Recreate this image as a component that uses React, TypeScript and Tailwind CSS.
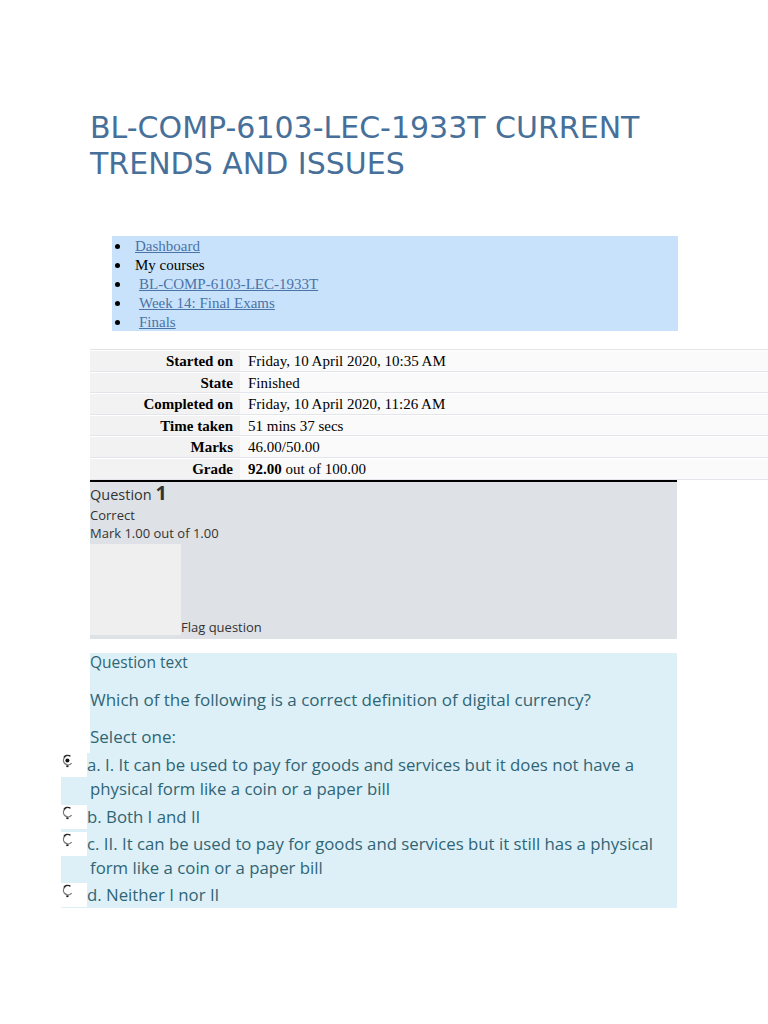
import React from "react";

const Radio = ({ checked }: { checked?: boolean }) => (
  <svg width="12" height="14" viewBox="0 0 12 14" className="block">
    <path d="M8.6 2.4 A4.6 4.6 0 1 0 9.6 9.2" fill="none" stroke="#777" strokeWidth="1.3" />
    <path d="M1.9 3.4 A4.6 4.6 0 0 1 8.1 2" fill="none" stroke="#222" strokeWidth="1.4" />
    {checked ? <circle cx="5.4" cy="6.4" r="2" fill="#111" /> : null}
    <rect x="4.3" y="11.4" width="2.2" height="1.7" fill="#222" />
  </svg>
);

const rows: [string, React.ReactNode][] = [
  ["Started on", "Friday, 10 April 2020, 10:35 AM"],
  ["State", "Finished"],
  ["Completed on", "Friday, 10 April 2020, 11:26 AM"],
  ["Time taken", "51 mins 37 secs"],
  ["Marks", "46.00/50.00"],
  [
    "Grade",
    <>
      <b>92.00</b> out of 100.00
    </>,
  ],
];

const crumbs: { t: string; link: boolean; pad: string }[] = [
  { t: "Dashboard", link: true, pad: "pl-[23px]" },
  { t: "My courses", link: false, pad: "pl-[23px]" },
  { t: "BL-COMP-6103-LEC-1933T", link: true, pad: "pl-[27px]" },
  { t: "Week 14: Final Exams", link: true, pad: "pl-[27px]" },
  { t: "Finals", link: true, pad: "pl-[27px]" },
];

const options: { lines: string[]; checked?: boolean }[] = [
  {
    lines: [
      "a. I. It can be used to pay for goods and services but it does not have a",
      "physical form like a coin or a paper bill",
    ],
    checked: true,
  },
  { lines: ["b. Both I and II"] },
  {
    lines: [
      "c. II. It can be used to pay for goods and services but it still has a physical",
      "form like a coin or a paper bill",
    ],
  },
  { lines: ["d. Neither I nor II"] },
];

export default function App() {
  const sans = { fontFamily: '"Open Sans", "Noto Sans", sans-serif' };
  const dejavu = { fontFamily: '"DejaVu Sans", Verdana, sans-serif' };
  const serif = { fontFamily: '"Liberation Serif", "Times New Roman", serif' };
  return (
    <div className="w-[768px] h-[1024px] bg-white overflow-hidden relative">
      <div className="pt-[110px] pl-[90px]">
        <h1 className="text-[30px] leading-[36px] text-[#46709a] font-normal" style={dejavu}>
          BL-COMP-6103-LEC-1933T CURRENT
          <br />
          TRENDS AND ISSUES
        </h1>
      </div>

      <div
        className="ml-[112px] mt-[54px] w-[566px] h-[95px] bg-[#c9e2fb] pt-[1px] text-[15px] leading-[19px]"
        style={serif}
      >
        {crumbs.map((c) => (
          <div key={c.t} className="relative h-[19px]">
            <span className="absolute left-[3px] top-[7px] w-[5px] h-[5px] rounded-full bg-black"></span>
            <span className={`${c.pad} ${c.link ? "text-[#4a73a6] underline" : "text-black"}`}>
              {c.t}
            </span>
          </div>
        ))}
      </div>

      <div className="ml-[90px] mt-[18px] w-[678px] border-t border-[#e3e3e3]" style={serif}>
        {rows.map(([k, v]) => (
          <div
            key={k}
            className="flex h-[21.6px] border-b border-[#e2e6ea] text-[15px] leading-[20px] pt-[1px]"
          >
            <div className="w-[150px] bg-[#f2f2f2] text-right pr-[7px] font-bold text-black">{k}</div>
            <div className="flex-1 bg-[#fafafa] pl-[8px] text-black">{v}</div>
          </div>
        ))}
      </div>

      <div
        className="ml-[90px] w-[587px] h-[159px] bg-[#dee2e6] border-t-2 border-black text-[#333]"
        style={sans}
      >
        <div className="text-[14.5px] leading-[22px] h-[24px]">
          Question <span className="text-[20px] font-bold text-[#333]">1</span>
        </div>
        <div className="text-[13px] leading-[18px]">Correct</div>
        <div className="text-[13px] leading-[18px]">Mark 1.00 out of 1.00</div>
        <div className="flex items-end mt-[2px]">
          <div className="w-[91px] h-[91px] bg-[#efefef]"></div>
          <div className="text-[13px] leading-[17px] mb-[-1px]">Flag question</div>
        </div>
      </div>

      <div className="mt-[14px] w-[677px] text-[#2e6575]" style={sans}>
        <div className="ml-[90px] w-[587px] bg-[#def0f7]">
          <div className="text-[15.5px] leading-[18px]">Question text</div>
          <div className="text-[17px] leading-[24px] mt-[17px]">
            Which of the following is a correct definition of digital currency?
          </div>
          <div className="text-[17px] leading-[24px] mt-[13px] pb-[4px]">Select one:</div>
        </div>
        <div className="ml-[61px] w-[616px] bg-[#def0f7] text-[16.8px] leading-[24px] pb-[1px]">
          {options.map((o, i) => (
            <div key={i} className={i === 0 ? "" : i === 1 ? "mt-[4.5px]" : "mt-[3px]"}>
              <div className="flex items-start">
                <div className="w-[26px] h-[24px] bg-white pt-[1px] pl-[1px]">
                  <Radio checked={o.checked} />
                </div>
                <span className="whitespace-nowrap">{o.lines[0]}</span>
              </div>
              {o.lines[1] ? <div className="pl-[29px] whitespace-nowrap">{o.lines[1]}</div> : null}
            </div>
          ))}
        </div>
      </div>
    </div>
  );
}
